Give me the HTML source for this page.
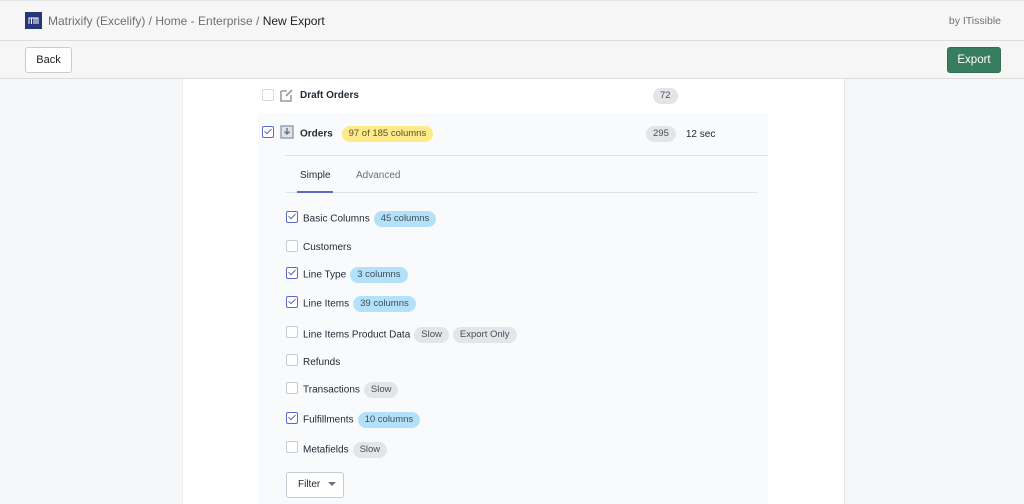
<!DOCTYPE html>
<html><head><meta charset="utf-8"><style>
*{box-sizing:border-box;margin:0;padding:0}
body{width:1024px;height:504px;overflow:hidden;background:#f4f6f8;font-family:"Liberation Sans",sans-serif;color:#212b36;position:relative}
.top{position:absolute;left:0;top:0;width:1024px;height:41px;background:#f6f6f7;border-top:1px solid #e1e3e5;border-bottom:1px solid #dcdcdc}
.bar{position:absolute;left:0;top:41px;width:1024px;height:38px;background:#f6f6f7;border-bottom:1px solid #dcdcdc}
.logo{position:absolute;left:25px;top:12px;width:17px;height:17px;background:#27357a}
.crumb{position:absolute;left:48px;top:14px;font-size:12px;color:#6d7175}
.crumb b{font-weight:normal;color:#202223}
.by{position:absolute;right:23px;top:15px;font-size:10.5px;color:#6d7175}
.btn{position:absolute;top:47px;height:26px;border-radius:3px;font-size:11px;line-height:24px;text-align:center}
.back{left:25px;width:47px;background:#fff;border:1px solid #c9cccf;color:#202223}
.exp{left:947px;width:54px;background:#367e5f;border:1px solid #2e6e52;color:#fff;font-size:11.5px}
.panel{position:absolute;left:182px;top:79px;width:663px;height:425px;background:#fff;border-right:1px solid #e6e8ea;border-left:1px solid #eceef0}
.ord{position:absolute;left:258px;top:113px;width:510px;height:391px;background:#f9fafb}
.sep{position:absolute;left:285px;top:155px;width:483px;height:1px;background:#e1e3e5}
.tabline{position:absolute;left:285px;top:192px;width:472px;height:1px;background:#e1e3e5}
.tabsel{position:absolute;left:297px;top:191px;width:36px;height:2px;background:#5c6ac4}
.t{position:absolute;font-size:10px;white-space:nowrap}
.cb{position:absolute;width:12px;height:12px;border:1px solid #c4cdd5;border-radius:2px;background:#fff}
.cb.on{border-color:#5c6ac4}
.cb.on::after{content:"";position:absolute;left:3px;top:0px;width:3px;height:6px;border:solid #5c6ac4;border-width:0 1.3px 1.3px 0;transform:rotate(45deg)}
.pill{display:inline-block;font-size:9.5px;padding:0 7px;height:16px;line-height:16px;border-radius:8px;background:#e4e5e7;color:#454f5b;margin-left:4px;vertical-align:middle}
.blue{background:#b4e1fa;color:#3e4e57}
.yel{background:#ffea8a;color:#595130}
.lbl{vertical-align:middle;color:#212b36}
</style></head><body>
<div class="top"></div>
<div class="logo"><svg width="17" height="17" viewBox="0 0 17 17"><path d="M4 12V6h9v6M6.5 6v6M9 6v6M11 6v6" stroke="#fff" stroke-width="1" fill="none"/></svg></div>
<div class="crumb">Matrixify (Excelify) / Home - Enterprise / <b>New Export</b></div>
<div class="by">by ITissible</div>
<div class="bar"></div>
<div class="btn back">Back</div>
<div class="btn exp">Export</div>
<div class="panel"></div>
<div class="ord"></div>
<div class="sep"></div>

<div class="cb" style="left:262px;top:89px;border-color:#d5d9dd"></div>
<svg style="position:absolute;left:280px;top:88px" width="14" height="14" viewBox="0 0 14 14"><path d="M1 3h6M1 3v10h10V7" stroke="#919eab" stroke-width="1.6" fill="none"/><path d="M6 8l6-6" stroke="#919eab" stroke-width="1.8"/></svg>
<div class="t" style="left:300px;top:90px;font-weight:bold">Draft Orders</div>
<div class="t" style="left:653px;top:88px"><span class="pill" style="margin:0">72</span></div>

<div class="cb on" style="left:262px;top:126px"></div>
<svg style="position:absolute;left:280px;top:125px" width="14" height="14" viewBox="0 0 14 14"><rect x="1" y="1" width="12" height="12" fill="#dfe3e8" stroke="#919eab" stroke-width="1.4"/><path d="M7 3v6M4.5 6.5L7 9l2.5-2.5" stroke="#637381" stroke-width="1.4" fill="none"/></svg>
<div class="t" style="left:300px;top:126px;font-weight:bold"><span class="lbl">Orders</span> <span class="pill yel" style="margin-left:6px;font-weight:normal">97 of 185 columns</span></div>
<div class="t" style="left:646px;top:126px"><span class="pill" style="margin:0">295</span><span style="margin-left:10px;vertical-align:middle">12 sec</span></div>

<div class="t" style="left:300px;top:170px">Simple</div>
<div class="t" style="left:356px;top:170px;color:#637381">Advanced</div>
<div class="tabline"></div><div class="tabsel"></div>

<div class="cb on" style="left:286px;top:211px"></div><div class="t" style="left:303px;top:211px"><span class="lbl">Basic Columns</span><span class="pill blue">45 columns</span></div>
<div class="cb" style="left:286px;top:240px"></div><div class="t" style="left:303px;top:242px">Customers</div>
<div class="cb on" style="left:286px;top:267px"></div><div class="t" style="left:303px;top:267px"><span class="lbl">Line Type</span><span class="pill blue">3 columns</span></div>
<div class="cb on" style="left:286px;top:296px"></div><div class="t" style="left:303px;top:296px"><span class="lbl">Line Items</span><span class="pill blue">39 columns</span></div>
<div class="cb" style="left:286px;top:326px"></div><div class="t" style="left:303px;top:327px"><span class="lbl">Line Items Product Data</span><span class="pill">Slow</span><span class="pill">Export Only</span></div>
<div class="cb" style="left:286px;top:354px"></div><div class="t" style="left:303px;top:357px">Refunds</div>
<div class="cb" style="left:286px;top:382px"></div><div class="t" style="left:303px;top:382px"><span class="lbl">Transactions</span><span class="pill">Slow</span></div>
<div class="cb on" style="left:286px;top:412px"></div><div class="t" style="left:303px;top:412px"><span class="lbl">Fulfillments</span><span class="pill blue">10 columns</span></div>
<div class="cb" style="left:286px;top:441px"></div><div class="t" style="left:303px;top:442px"><span class="lbl">Metafields</span><span class="pill">Slow</span></div>

<div style="position:absolute;left:286px;top:472px;width:58px;height:26px;background:#fff;border:1px solid #c4cdd5;border-radius:3px;font-size:10px;line-height:24px;padding-left:11px">Filter <span style="display:inline-block;width:0;height:0;border-left:4px solid transparent;border-right:4px solid transparent;border-top:4px solid #637381;margin-left:5px;vertical-align:middle"></span></div>
</body></html>
